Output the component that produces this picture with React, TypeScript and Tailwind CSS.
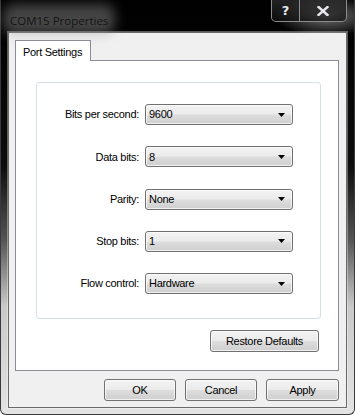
const ui = "font-['Liberation_Sans',Arial,sans-serif] text-[11px] tracking-[-0.3px] text-black";

const btnBg =
  "bg-[linear-gradient(to_bottom,#f3f3f3_0%,#ebebeb_48%,#dddddd_52%,#cfcfcf_100%)] border border-[#707070] rounded-[3px] shadow-[inset_0_0_0_1px_rgba(255,255,255,0.7)]";

const fields = [
  { label: "Bits per second:", value: "9600" },
  { label: "Data bits:", value: "8" },
  { label: "Parity:", value: "None" },
  { label: "Stop bits:", value: "1" },
  { label: "Flow control:", value: "Hardware" },
];

function Combo({ value }: { value: string }) {
  return (
    <div className={`flex h-[21px] w-[148px] items-center justify-between pl-[3px] pr-[6px] ${btnBg}`}>
      <span className={ui}>{value}</span>
      <svg width="8" height="4" viewBox="0 0 8 4">
        <path d="M0 0h7L3.5 4z" fill="#000" />
      </svg>
    </div>
  );
}

function Button({ label, w }: { label: string; w: string }) {
  return (
    <div className={`flex h-[22px] items-center justify-center ${w} ${btnBg}`}>
      <span className={ui}>{label}</span>
    </div>
  );
}

export default function App() {
  return (
    <div className="h-[418px] w-[355px] overflow-hidden bg-white">
      <div className="relative flex h-[415px] w-[355px] flex-col rounded-b-[6px] border-x border-b border-[#3a3a3a] bg-[linear-gradient(to_bottom,#000000_0%,#0d0d0d_40%,#555555_58%,#c9c9c9_74%,#e4e4e4_100%)] px-[7px]">
        {/* glass reflection */}
        <div className="pointer-events-none absolute right-0 top-0 h-[40px] w-[90px] bg-[radial-gradient(ellipse_at_70%_40%,rgba(255,255,255,0.45),rgba(255,255,255,0)_60%)]" />

        {/* title bar */}
        <div className="relative flex h-[32px] shrink-0 items-start">
          <div className="relative mt-[7px] ml-[1px]">
            <div className="absolute -inset-x-[6px] -inset-y-[3px] rounded-[10px] bg-[rgba(150,150,150,0.45)] blur-[6px]" />
            <span className="relative px-[1px] font-['Open_Sans','Noto_Sans',sans-serif] text-[11.5px] text-[#141414]">
              COM15 Properties
            </span>
          </div>
          <div className="absolute right-[0px] top-0 flex h-[22px] overflow-hidden rounded-b-[5px] border-x border-b border-[#8c8c8c] bg-[linear-gradient(to_bottom,rgba(50,50,50,0.7),rgba(15,15,15,0.7))]">
            <div className="flex w-[28px] items-center justify-center border-r border-[#8c8c8c] font-['DejaVu_Sans',sans-serif] text-[13px] font-bold leading-none text-[#eaeaf0]">
              ?
            </div>
            <div className="flex w-[46px] items-center justify-center">
              <svg width="12" height="10" viewBox="0 0 12 10">
                <path d="M1.5 1l9 8M10.5 1l-9 8" stroke="#e8e8ee" strokeWidth="2.4" strokeLinecap="square" />
              </svg>
            </div>
          </div>
        </div>

        {/* client area */}
        <div className="flex h-[376px] shrink-0 flex-col border border-[#6a6a6a] bg-[#f0f0f0] pl-[6px] pr-[7px] shadow-[0_0_0_1px_rgba(255,255,255,0.35)]">
          <div className="mt-[7px] flex">
            <div className="relative z-10 -mb-px flex h-[21px] w-[76px] items-start border-x border-t border-[#898c95] bg-white pl-[7px] pt-[3px]">
              <span className={ui}>Port Settings</span>
            </div>
          </div>

          <div className="flex h-[311px] flex-col border border-[#898c95] bg-white pl-[20px] pr-[17px] pt-[21px]">
            <div className="flex h-[237px] flex-col gap-[21.25px] rounded-[3px] border border-[#d5dfe5] pt-[21px]">
              {fields.map((f) => (
                <div key={f.label} className="flex items-center">
                  <div className={`w-[102px] text-right ${ui}`}>{f.label}</div>
                  <div className="ml-[6px]">
                    <Combo value={f.value} />
                  </div>
                </div>
              ))}
            </div>
            <div className="mt-[11px] flex justify-end pr-[2px]">
              <Button label="Restore Defaults" w="w-[109px]" />
            </div>
          </div>

          <div className="mt-[8px] flex justify-end gap-[9px]">
            <Button label="OK" w="w-[72px]" />
            <Button label="Cancel" w="w-[72px]" />
            <Button label="Apply" w="w-[73px]" />
          </div>
        </div>
      </div>
    </div>
  );
}
